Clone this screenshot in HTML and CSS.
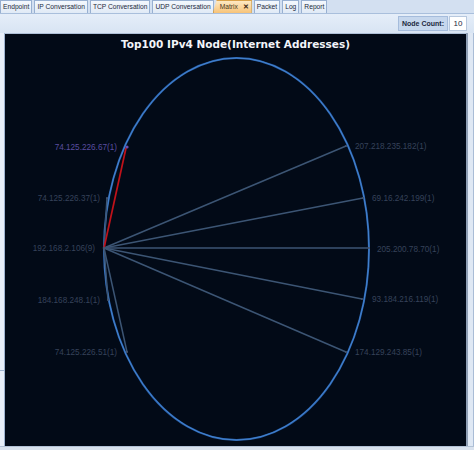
FILE: index.html
```html
<!DOCTYPE html>
<html>
<head>
<meta charset="utf-8">
<link rel="stylesheet" href="styles.css">
</head>
<body>
<div class="app">
  <div class="tabs">
    <div class="tab">Endpoint</div>
    <div class="tab">IP Conversation</div>
    <div class="tab">TCP Conversation</div>
    <div class="tab">UDP Conversation</div>
    <div class="tab active">Matrix <span class="close">✕</span></div>
    <div class="tab">Packet</div>
    <div class="tab">Log</div>
    <div class="tab">Report</div>
  </div>
  <div class="toolbar">
    <div class="nc-label">Node Count:</div>
    <div class="nc-input">10</div>
  </div>
  <div class="main">
    <div class="side-left"><div class="divider"></div></div>
    <div class="chart">
      <div class="title">Top100 IPv4 Node(Internet Addresses)</div>
      <svg class="canvas" viewBox="5 33 461 413" width="461" height="413">
        <ellipse cx="236.5" cy="249" rx="132.5" ry="191" fill="none" stroke="#2a62ad" stroke-width="2"/>
        <ellipse cx="236.5" cy="249" rx="132.5" ry="191" fill="none" stroke="#4a8ad6" stroke-width="0.8"/>
        <g class="edges" stroke="#3c5574" stroke-width="1.5" fill="none">
          <line x1="104" y1="248" x2="346" y2="146"/>
          <line x1="104" y1="248" x2="363" y2="198"/>
          <line x1="104" y1="248" x2="369" y2="248"/>
          <line x1="104" y1="248" x2="362" y2="299"/>
          <line x1="104" y1="248" x2="346" y2="352"/>
          <line x1="104" y1="248" x2="107" y2="198"/>
          <line x1="104" y1="248" x2="108" y2="300"/>
          <line x1="104" y1="248" x2="127" y2="352"/>
        </g>
        <line x1="104" y1="248" x2="126" y2="148" stroke="#c0121a" stroke-width="1.7"/>
        <g fill="#44536e">
          <circle cx="127" cy="147" r="1.6" fill="#6a4fb0"/>
          <circle cx="107" cy="198" r="1.1"/>
          <circle cx="104" cy="248" r="1.3"/>
          <circle cx="108" cy="300" r="1.1"/>
          <circle cx="127" cy="352" r="1.1"/>
          <circle cx="346" cy="146" r="1.1"/>
          <circle cx="363" cy="198" r="1.1"/>
          <circle cx="369" cy="248" r="1.1"/>
          <circle cx="362" cy="299" r="1.1"/>
          <circle cx="346" cy="352" r="1.1"/>
        </g>
        <g class="labels">
          <text x="117" y="150" text-anchor="end" class="hl">74.125.226.67(1)</text>
          <text x="100" y="201" text-anchor="end">74.125.226.37(1)</text>
          <text x="95" y="251" text-anchor="end">192.168.2.106(9)</text>
          <text x="100" y="303" text-anchor="end">184.168.248.1(1)</text>
          <text x="117" y="355" text-anchor="end">74.125.226.51(1)</text>
          <text x="355" y="149">207.218.235.182(1)</text>
          <text x="372" y="201">69.16.242.199(1)</text>
          <text x="377" y="252">205.200.78.70(1)</text>
          <text x="372" y="302">93.184.216.119(1)</text>
          <text x="355" y="355">174.129.243.85(1)</text>
        </g>
      </svg>
    </div>
    <div class="side-right"></div>
  </div>
  <div class="bottom"></div>
</div>
</body>
</html>
```

FILE: styles.css
```css
html, body {
  margin: 0;
  padding: 0;
}
body {
  width: 474px;
  height: 450px;
  overflow: hidden;
  background: #dce6f3;
  font-family: "Liberation Sans", Arial, sans-serif;
}
.app {
  display: flex;
  flex-direction: column;
  height: 450px;
}
.tabs {
  height: 14px;
  display: flex;
  align-items: flex-end;
  gap: 2px;
  background: #d3e0f1;
  padding-left: 0;
  box-sizing: border-box;
  border-bottom: 1px solid #a9bfdc;
}
.tab {
  height: 13px;
  box-sizing: border-box;
  padding: 0 2px;
  font-size: 6.7px;
  line-height: 12px;
  color: #1e2a3c;
  background: linear-gradient(#f4f8fd, #e0eaf6);
  border: 1px solid #98b0d1;
  border-bottom: none;
  white-space: nowrap;
}
.tab.active {
  background: linear-gradient(#fde9c3, #f7c378);
  border-color: #d9a24a;
  color: #4a3a20;
  padding-left: 6px;
  margin-left: -3px;
  clip-path: polygon(4px 0, 100% 0, 100% 100%, 0 100%);
}
.tab.active .close {
  font-size: 7px;
  margin-left: 3px;
  font-weight: bold;
  color: #3a2a18;
}
.toolbar {
  height: 19px;
  display: flex;
  justify-content: flex-end;
  align-items: center;
  padding-right: 7px;
  background: linear-gradient(#e5eef9, #d8e4f3);
}
.nc-label {
  height: 15px;
  box-sizing: border-box;
  padding: 0 3px;
  font-size: 7px;
  font-weight: bold;
  line-height: 13px;
  color: #1b2840;
  background: #c6d7ed;
  border: 1px solid #a5bcdc;
}
.nc-input {
  width: 18px;
  height: 15px;
  box-sizing: border-box;
  margin-left: 1px;
  font-size: 8px;
  line-height: 13px;
  text-align: center;
  color: #1b2840;
  background: #ffffff;
  border: 1px solid #b7c8de;
}
.main {
  display: flex;
  height: 413px;
}
.side-left {
  width: 5px;
  background: #e8eff9;
  border-right: 1px solid #9eb3cf;
  box-sizing: border-box;
}
.divider {
  margin-top: 337px;
  height: 1px;
  background: #9eb3cf;
}
.chart {
  width: 461px;
  position: relative;
  background: #020a17;
  border-top: 1px solid #aebfd6;
  box-sizing: border-box;
}
.title {
  position: relative;
  z-index: 1;
  text-align: center;
  padding-top: 3px;
  font-family: "DejaVu Sans", Verdana, sans-serif;
  font-weight: bold;
  font-size: 10.5px;
  line-height: 14px;
  color: #f2f5fa;
}
.canvas {
  position: absolute;
  left: 0;
  top: -1px;
}
.labels text {
  font-family: "Liberation Sans", Arial, sans-serif;
  font-size: 8.2px;
  fill: #36425a;
}
.labels text.hl {
  fill: #5a4ea0;
}
.side-right {
  width: 8px;
  background: #dfe8f4;
  border-left: 2px solid #8f9fb5;
  border-right: 1px solid #a9bcd6;
  box-sizing: border-box;
}
.bottom {
  flex: 1;
  background: #d9e2ee;
  border-top: 1px solid #b3c2d6;
}
```
